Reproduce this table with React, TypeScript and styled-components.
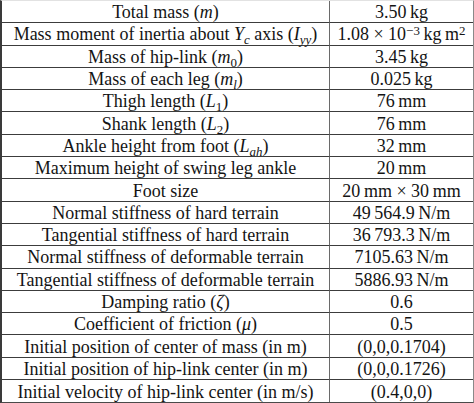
import React from 'react'
import styled, { createGlobalStyle } from 'styled-components'

const GlobalStyle = createGlobalStyle`
  html, body {
    margin: 0;
    padding: 0;
    background: #ffffff;
  }
  body {
    font-family: 'Liberation Serif', 'Times New Roman', serif;
    color: #141414;
  }
`

const Page = styled.div`
  width: 474px;
  height: 403px;
  overflow: hidden;
  background: #f4f4f4;
`

const Table = styled.div`
  width: 471px;
  border-left: 2px solid #3a3a3a;
  border-right: 1px solid #8a8a8a;
  border-top: 1px solid #e2e2e2;
  border-bottom: 1px solid #4a4a4a;
  background: #ffffff;
  display: grid;
  grid-template-columns: 327px 1fr;
`

const Cell = styled.div<{ $value?: boolean; $last?: boolean }>`
  height: 22.3px;
  box-sizing: border-box;
  border-bottom: ${(p) => (p.$last ? 'none' : '1px solid #3c3c3c')};
  border-left: ${(p) => (p.$value ? '1px solid #6a6a6a' : 'none')};
  display: flex;
  align-items: center;
  justify-content: center;
  font-size: 18px;
  white-space: nowrap;
  padding-top: 1px;
`

const Text = styled.span`
  line-height: 1;
`

const Sub = styled.sub`
  font-size: 0.72em;
  vertical-align: -0.28em;
  line-height: 0;
`

const Sup = styled.sup`
  font-size: 0.72em;
  vertical-align: 0.42em;
  line-height: 0;
`

const Var = styled.i`
  font-style: italic;
`

const rows: [React.ReactNode, React.ReactNode][] = [
  [<>Total mass (<Var>m</Var>)</>, <>3.50&#8201;kg</>],
  [
    <>Mass moment of inertia about <Var>Y</Var><Sub><Var>c</Var></Sub> axis (<Var>I</Var><Sub><Var>yy</Var></Sub>)</>,
    <>1.08 × 10<Sup>−3</Sup>&#8201;kg&#8201;m<Sup>2</Sup></>,
  ],
  [<>Mass of hip-link (<Var>m</Var><Sub>0</Sub>)</>, <>3.45&#8201;kg</>],
  [<>Mass of each leg (<Var>m</Var><Sub><Var>l</Var></Sub>)</>, <>0.025&#8201;kg</>],
  [<>Thigh length (<Var>L</Var><Sub>1</Sub>)</>, <>76&#8201;mm</>],
  [<>Shank length (<Var>L</Var><Sub>2</Sub>)</>, <>76&#8201;mm</>],
  [<>Ankle height from foot (<Var>L</Var><Sub><Var>ah</Var></Sub>)</>, <>32&#8201;mm</>],
  [<>Maximum height of swing leg ankle</>, <>20&#8201;mm</>],
  [<>Foot size</>, <>20&#8201;mm × 30&#8201;mm</>],
  [<>Normal stiffness of hard terrain</>, <>49&#8201;564.9&#8201;N/m</>],
  [<>Tangential stiffness of hard terrain</>, <>36&#8201;793.3&#8201;N/m</>],
  [<>Normal stiffness of deformable terrain</>, <>7105.63&#8201;N/m</>],
  [<>Tangential stiffness of deformable terrain</>, <>5886.93&#8201;N/m</>],
  [<>Damping ratio (<Var>ζ</Var>)</>, <>0.6</>],
  [<>Coefficient of friction (<Var>μ</Var>)</>, <>0.5</>],
  [<>Initial position of center of mass (in m)</>, <>(0,0,0.1704)</>],
  [<>Initial position of hip-link center (in m)</>, <>(0,0,0.1726)</>],
  [<>Initial velocity of hip-link center (in m/s)</>, <>(0.4,0,0)</>],
]

export default function App() {
  return (
    <Page>
      <GlobalStyle />
      <Table>
        {rows.map(([label, value], i) => (
          <React.Fragment key={i}>
            <Cell $last={i === rows.length - 1}>
              <Text>{label}</Text>
            </Cell>
            <Cell $value $last={i === rows.length - 1}>
              <Text>{value}</Text>
            </Cell>
          </React.Fragment>
        ))}
      </Table>
    </Page>
  )
}
